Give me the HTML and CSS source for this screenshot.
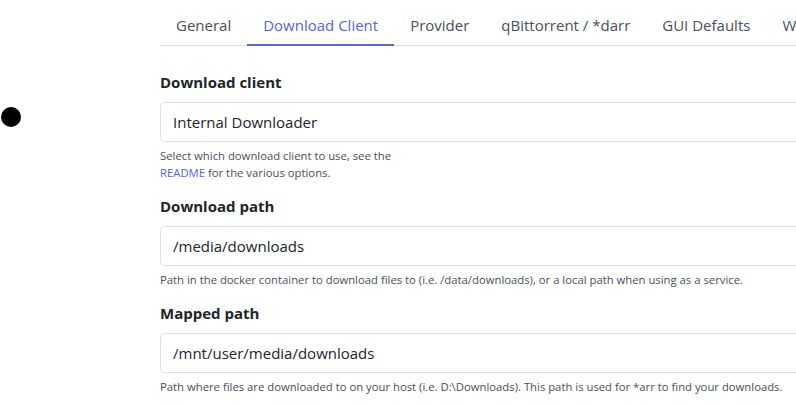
FILE: index.html
```html
<!DOCTYPE html>
<html lang="en">
<head>
<meta charset="utf-8">
<title>Settings</title>
<link rel="stylesheet" href="styles.css">
</head>
<body>
<div class="page">
  <aside class="side">
    <span class="dot"></span>
  </aside>
  <main class="main">
    <nav class="tabs">
      <a class="tab">General</a>
      <a class="tab active">Download Client</a>
      <a class="tab">Provider</a>
      <a class="tab">qBittorrent / *darr</a>
      <a class="tab">GUI Defaults</a>
      <a class="tab">WebUI</a>
    </nav>
    <form class="form">
      <div class="group">
        <label class="label">Download client</label>
        <div class="input">Internal Downloader</div>
        <div class="help">Select which download client to use, see the<br><a class="link">README</a> for the various options.</div>
      </div>
      <div class="group">
        <label class="label">Download path</label>
        <div class="input">/media/downloads</div>
        <div class="help">Path in the docker container to download files to (i.e. /data/downloads), or a local path when using as a service.</div>
      </div>
      <div class="group">
        <label class="label">Mapped path</label>
        <div class="input">/mnt/user/media/downloads</div>
        <div class="help">Path where files are downloaded to on your host (i.e. D:\Downloads). This path is used for *arr to find your downloads.</div>
      </div>
    </form>
  </main>
</div>
</body>
</html>
```
FILE: styles.css
```css
html, body {
  margin: 0;
  padding: 0;
  background: #ffffff;
  overflow: hidden;
}
body {
  font-family: "Open Sans", "Noto Sans", sans-serif;
  color: #212529;
}
.page {
  display: flex;
  width: 1100px;
}
.side {
  width: 160px;
  flex-shrink: 0;
  padding-top: 107px;
}
.dot {
  display: block;
  width: 20px;
  height: 20px;
  margin-left: 1px;
  border-radius: 50%;
  background: #000;
}
.main {
  width: 900px;
  flex-shrink: 0;
}
.tabs {
  display: flex;
  margin-top: 5px;
  border-bottom: 1px solid #dee2e6;
  white-space: nowrap;
}
.tab {
  padding: 8px 16px 7px;
  line-height: 24px;
  font-size: 15px;
  color: #495057;
  border-bottom: 2px solid transparent;
  margin-bottom: -1px;
}
.tab.active {
  color: #5466d6;
  border-bottom-color: #5466d6;
}
.form {
  padding-top: 24px;
}
.group {
  margin-bottom: 13px;
}
.label {
  display: block;
  font-weight: 700;
  font-size: 15px;
  line-height: 24px;
  margin-bottom: 8px;
}
.input {
  box-sizing: border-box;
  height: 40px;
  padding: 0 12px;
  line-height: 38px;
  font-size: 15px;
  border: 1px solid #dee2e6;
  border-radius: 4px;
  color: #212529;
}
.help {
  margin-top: 5px;
  font-size: 11.3px;
  line-height: 17px;
  color: #495057;
}
.link {
  color: #5466d6;
}
```
